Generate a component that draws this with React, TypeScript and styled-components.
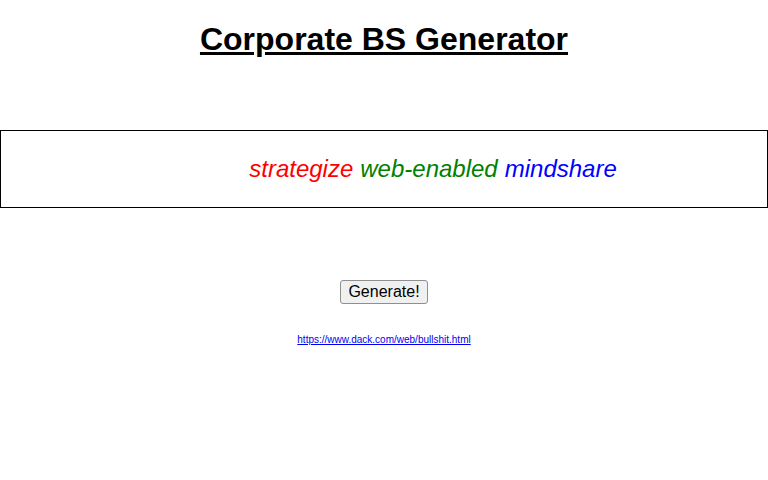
import React, { useState } from "react";
import styled, { createGlobalStyle } from "styled-components";

const GlobalStyle = createGlobalStyle`
  body {
    margin: 0;
    background: #ffffff;
    font-family: "Liberation Sans", Arial, sans-serif;
  }
`;

const Page = styled.div`
  display: flex;
  flex-direction: column;
  align-items: stretch;
`;

const Title = styled.h1`
  margin: 20px 0 0;
  height: 38px;
  font-size: 32px;
  line-height: 38px;
  font-weight: 700;
  text-align: center;
  text-decoration: underline;
  color: #000;
`;

const PhraseBox = styled.div`
  margin-top: 72px;
  height: 76px;
  border: 1px solid #000;
  display: flex;
  align-items: center;
  justify-content: center;
  padding-left: 98px;
  font-size: 24px;
  font-style: italic;
`;

const Word = styled.span<{ color: string }>`
  color: ${(props) => props.color};
  margin-right: 7px;

  &:last-child {
    margin-right: 0;
  }
`;

const Controls = styled.div`
  margin-top: 72px;
  display: flex;
  flex-direction: column;
  align-items: center;
`;

const Button = styled.button`
  font-family: "Liberation Sans", Arial, sans-serif;
  font-size: 16px;
  padding: 1px 7px;
  height: 24px;
  border: 1px solid #8f8f8f;
  border-radius: 3px;
  background: #f0f0f0;
  color: #000;
`;

const SourceLink = styled.a`
  margin-top: 30px;
  font-size: 10px;
  color: #0000ee;
  text-decoration: underline;
`;

const verbs = ["strategize", "leverage", "synergize", "monetize", "incubate"];
const adjectives = ["web-enabled", "scalable", "frictionless", "holistic", "viral"];
const nouns = ["mindshare", "paradigms", "deliverables", "synergies", "eyeballs"];

const pick = (list: string[]) => list[Math.floor(Math.random() * list.length)];

const App = () => {
  const [phrase, setPhrase] = useState([verbs[0], adjectives[0], nouns[0]]);

  return (
    <Page>
      <GlobalStyle />
      <Title>Corporate BS Generator</Title>
      <PhraseBox>
        <Word color={"#ff0000"}>{phrase[0]}</Word>
        <Word color={"#008000"}>{phrase[1]}</Word>
        <Word color={"#0000ff"}>{phrase[2]}</Word>
      </PhraseBox>
      <Controls>
        <Button
          onClick={() => {
            setPhrase([pick(verbs), pick(adjectives), pick(nouns)]);
          }}>
          Generate!
        </Button>
        <SourceLink href="https://www.dack.com/web/bullshit.html">
          https://www.dack.com/web/bullshit.html
        </SourceLink>
      </Controls>
    </Page>
  );
};

export default App;
